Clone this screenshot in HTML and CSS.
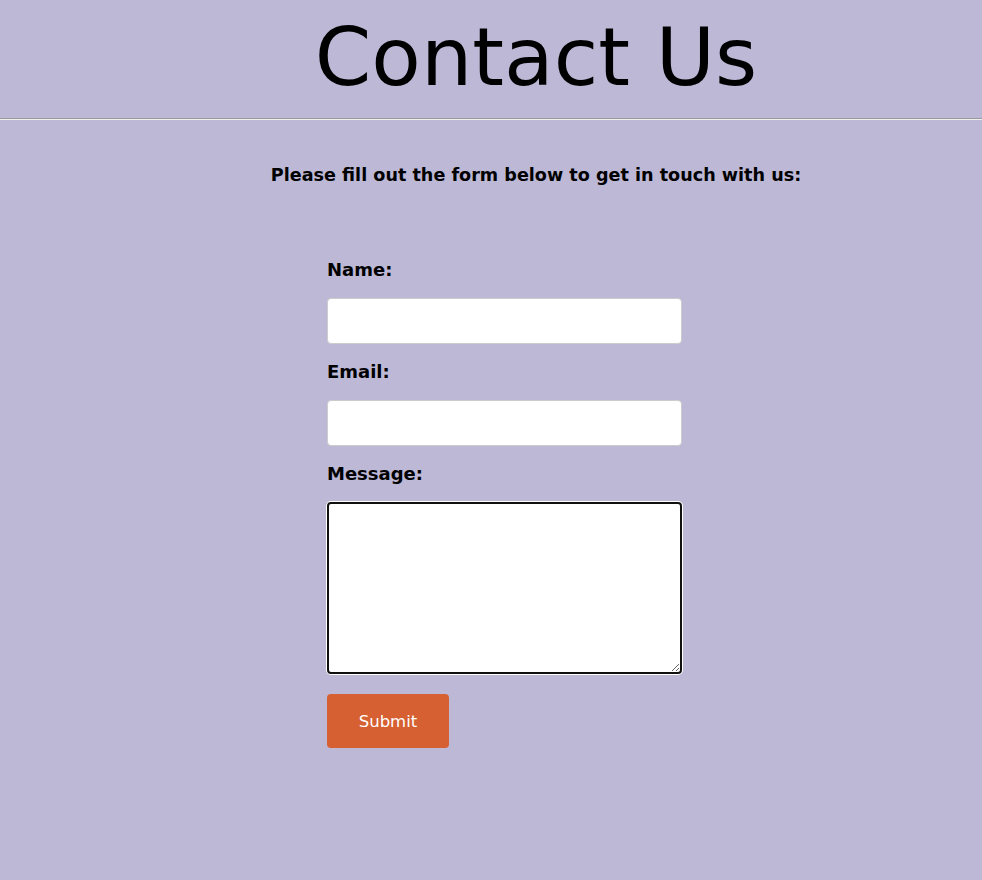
FILE: index.html
```html
<!DOCTYPE html>
<html>
<head>
<meta charset="utf-8">
<link rel="stylesheet" href="styles.css">
</head>
<body>
<header class="header">
  <h1 class="title">Contact Us</h1>
</header>
<hr class="rule">
<main class="main">
  <p class="intro">Please fill out the form below to get in touch with us:</p>
  <form class="form">
    <label class="label" for="name">Name:</label>
    <input class="field" type="text" id="name">
    <label class="label" for="email">Email:</label>
    <input class="field" type="email" id="email">
    <label class="label" for="message">Message:</label>
    <textarea class="area" id="message"></textarea>
    <button class="submit" type="button">Submit</button>
  </form>
</main>
</body>
</html>
```
FILE: styles.css
```css
html, body {
  margin: 0;
  padding: 0;
  background: #bcb8d6;
  font-family: "DejaVu Sans", sans-serif;
  color: #000;
}
.header {
  text-align: center;
  padding-left: 90px;
  height: 118px;
  display: flex;
  justify-content: center;
  align-items: flex-start;
}
.title {
  margin: 12px 0 0;
  font-size: 81px;
  font-weight: 400;
  line-height: 90px;
}
.rule {
  margin: 0;
  border: 0;
  border-top: 1px solid #9a9a9a;
  border-bottom: 1px solid #eeeeee;
  height: 0;
}
.main {
  padding-left: 90px;
  display: flex;
  flex-direction: column;
  align-items: center;
}
.intro {
  margin: 43px 0 0;
  font-size: 17.6px;
  font-weight: 700;
  line-height: 24px;
}
.form {
  align-self: flex-start;
  margin: 71px 0 0 237px;
  display: flex;
  flex-direction: column;
  align-items: flex-start;
  width: 355px;
}
.label {
  font-size: 18px;
  font-weight: 700;
  line-height: 24px;
  margin-bottom: 16px;
}
.field {
  box-sizing: border-box;
  width: 355px;
  height: 46px;
  border: 1px solid #cccccc;
  border-radius: 4px;
  background: #fff;
  margin: 0 0 16px;
}
.area {
  box-sizing: border-box;
  width: 355px;
  height: 172px;
  border: 2px solid #101010;
  border-radius: 4px;
  box-shadow: 0 0 0 1px #fff;
  background: #fff;
  margin: 0 0 20px;
  resize: both;
}
.submit {
  width: 122px;
  height: 54px;
  background: #d66031;
  color: #fff;
  border: 0;
  border-radius: 4px;
  font-family: "DejaVu Sans", sans-serif;
  font-size: 16.5px;
}
```
